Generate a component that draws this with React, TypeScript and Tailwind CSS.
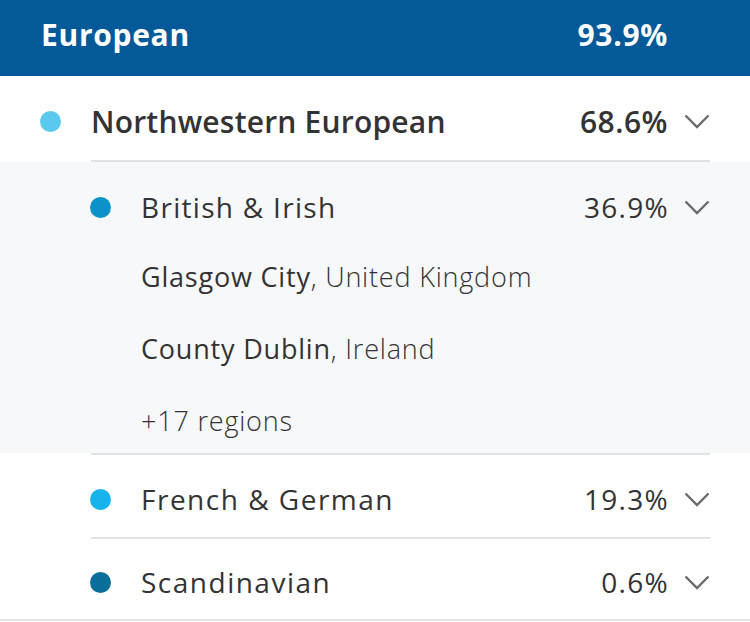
import React from 'react';

const Chevron = () => (
  <svg width="26" height="15" viewBox="0 0 26 15" className="shrink-0">
    <path d="M1.5 1.5 L13 13 L24.5 1.5" fill="none" stroke="#6b6b6b" strokeWidth="2.4" />
  </svg>
);

const Dot = ({ color }: { color: string }) => (
  <span className={`block w-[21px] h-[21px] rounded-full shrink-0 ${color}`} />
);

const regions = [
  { name: 'Glasgow City', place: 'United Kingdom' },
  { name: 'County Dublin', place: 'Ireland' },
];

const subRows = [
  { name: 'French & German', pct: '19.3%', dot: 'bg-[#16b3ec]' },
  { name: 'Scandinavian', pct: '0.6%', dot: 'bg-[#0a6f9a]' },
];

const App: React.FC = () => {
  return (
    <div className="w-[750px] h-[622px] bg-white text-[#333] overflow-hidden" style={{ fontFamily: '"Open Sans", "Noto Sans", sans-serif' }}>
      {/* header */}
      <div className="h-[76px] bg-[#045a99] flex items-center justify-between pb-[7px] pl-[41px] pr-[82px] text-white text-[30px] font-bold tracking-[0.7px]">
        <span>European</span>
        <span>93.9%</span>
      </div>

      {/* Northwestern European */}
      <div className="h-[84px] flex items-center pt-[6px] pl-[40px] pr-[40px]">
        <Dot color="bg-[#5bc8ef]" />
        <span className="ml-[30px] text-[30px] font-semibold tracking-[0.2px] flex-1">Northwestern European</span>
        <span className="text-[30px] font-semibold tracking-[0.5px]">68.6%</span>
        <span className="ml-[16px]"><Chevron /></span>
      </div>
      <div className="ml-[91px] mr-[40px] h-[2px] bg-[#e1e2e4]" />

      {/* expanded sub-region */}
      <div className="bg-[#f7f8fa] h-[291px] flex flex-col">
        <div className="h-[90px] flex items-center pl-[90px] pr-[40px]">
          <Dot color="bg-[#0b93c9]" />
          <span className="ml-[30px] text-[28px] tracking-[1.3px] flex-1">British &amp; Irish</span>
          <span className="text-[28px] tracking-[1.3px]">36.9%</span>
          <span className="ml-[15px]"><Chevron /></span>
        </div>
        <div className="flex flex-col gap-[36px] mt-[7px] pl-[141px] text-[27px] leading-[36px] tracking-[0.8px]">
          {regions.map(r => (
            <div key={r.name}>
              <span className="font-medium">{r.name}</span>
              <span className="font-light">, {r.place}</span>
            </div>
          ))}
          <div className="font-light">+17 regions</div>
        </div>
      </div>

      {subRows.map((row, i) => (
        <div key={row.name}>
          <div className="ml-[91px] mr-[40px] h-[2px] bg-[#e1e2e4]" />
          <div className={`${i === 0 ? 'h-[82px]' : 'h-[80px]'} flex items-center pt-[6px] pl-[90px] pr-[40px]`}>
            <Dot color={row.dot} />
            <span className="ml-[30px] text-[28px] tracking-[1.5px] flex-1">{row.name}</span>
            <span className="text-[28px] tracking-[1.3px]">{row.pct}</span>
            <span className="ml-[15px]"><Chevron /></span>
          </div>
        </div>
      ))}
      <div className="h-[2px] bg-[#e1e2e4]" />
    </div>
  );
};

export default App;
